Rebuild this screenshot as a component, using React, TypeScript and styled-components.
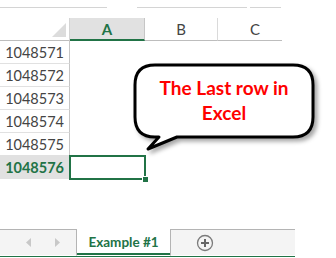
import React from 'react';
import styled, { createGlobalStyle } from 'styled-components';

const GlobalStyle = createGlobalStyle`
  html, body {
    margin: 0;
    padding: 0;
    background: #fff;
  }
  body {
    font-family: Lato, "Liberation Sans", sans-serif;
  }
`;

const Page = styled.div`
  position: relative;
  width: 336px;
  height: 258px;
  overflow: hidden;
  display: flex;
  flex-direction: column;
`;

/* bits of the name box / formula bar cut off at the top */
const TopStrip = styled.div`
  height: 18px;
  display: flex;
  align-items: flex-start;
`;

const BarEdge = styled.div<{ $gap: number; $width: number }>`
  margin-left: ${p => p.$gap}px;
  width: ${p => p.$width}px;
  height: 7px;
  border-bottom: 1px solid #d4d4d4;
`;

const Sheet = styled.div`
  display: grid;
  grid-template-columns: 70px 75px 73px 64px;
  grid-auto-rows: 23px;
  width: 282px;
`;

const Corner = styled.div`
  position: relative;
  border-right: 1px solid #d4d4d4;
  border-bottom: 1px solid #bdbdbd;
  &::after {
    content: '';
    position: absolute;
    right: 3px;
    bottom: 3px;
    border-style: solid;
    border-width: 0 0 14px 14px;
    border-color: transparent transparent #dcdcdc transparent;
  }
`;

const ColHead = styled.div<{ $active?: boolean; $pad?: number }>`
  display: flex;
  align-items: center;
  justify-content: ${p => (p.$pad ? 'flex-start' : 'center')};
  padding-left: ${p => p.$pad || 0}px;
  font-size: 15px;
  font-weight: ${p => (p.$active ? 700 : 400)};
  color: ${p => (p.$active ? '#217346' : '#444')};
  background: ${p => (p.$active ? '#e1e1e1' : '#fff')};
  border-right: 1px solid ${p => (p.$active ? '#c6c6c6' : '#dadada')};
  border-bottom: ${p => (p.$active ? '2px solid #217346' : '1px solid #bdbdbd')};
  padding-top: ${p => (p.$active ? 1 : 0)}px;
`;

const LastHead = styled(ColHead)`
  border-right: none;
`;

const RowHead = styled.div<{ $active?: boolean }>`
  display: flex;
  align-items: center;
  justify-content: flex-end;
  padding-right: 5px;
  font-size: 14.5px;
  font-weight: ${p => (p.$active ? 700 : 400)};
  color: ${p => (p.$active ? '#217346' : '#444')};
  background: ${p => (p.$active ? '#e1e1e1' : '#fff')};
  border-right: 1px solid #c6c6c6;
  border-bottom: 1px solid #e1e1e1;
`;

const Cell = styled.div`
  position: relative;
`;

const Selection = styled.div`
  position: absolute;
  left: -1px;
  top: -1px;
  right: -1px;
  bottom: -1px;
  border: 2px solid #217346;
  &::after {
    content: '';
    position: absolute;
    right: -4px;
    bottom: -4px;
    width: 5px;
    height: 5px;
    background: #217346;
    border: 1px solid #fff;
    border-right: none;
    border-bottom: none;
  }
`;

const Spacer = styled.div`
  flex: 1;
`;

const TabBar = styled.div`
  display: flex;
  width: 295px;
  height: 27px;
  border-bottom: 1px solid #217346;
  margin-bottom: 1px;
`;

const Nav = styled.div`
  width: 77px;
  display: flex;
  align-items: center;
  gap: 24px;
  padding-left: 26px;
  box-sizing: border-box;
  background: #f4f4f4;
  border-top: 1px solid #b4b4b4;
  border-right: 1px solid #b4b4b4;
  border-bottom: 1px solid #fff;
`;

const Tab = styled.div`
  width: 93px;
  display: flex;
  align-items: center;
  justify-content: center;
  box-sizing: border-box;
  padding-top: 1px;
  font-size: 13.5px;
  font-weight: 700;
  color: #217346;
  background: #fff;
  border-bottom: 2px solid #217346;
  margin-bottom: 1px;
`;

const AddArea = styled.div`
  flex: 1;
  display: flex;
  align-items: center;
  padding-left: 25px;
  background: #f4f4f4;
  border-top: 1px solid #b4b4b4;
  border-left: 1px solid #b4b4b4;
  border-bottom: 1px solid #fff;
`;

const Callout = styled.div`
  position: absolute;
  left: 128px;
  top: 58px;
  width: 195px;
  height: 100px;
`;

const BubbleShape = styled.svg`
  position: absolute;
  inset: 0;
  filter: drop-shadow(3px 3px 2px rgba(0, 0, 0, 0.35));
`;

const BubbleText = styled.div`
  position: absolute;
  left: 7px;
  top: 17px;
  width: 178px;
  text-align: center;
  font-size: 19px;
  line-height: 25px;
  font-weight: 700;
  color: #ff0000;
`;

const Arrow = ({ dir }: { dir: 'left' | 'right' }) => (
  <svg width="5" height="9" viewBox="0 0 5 9">
    <path d={dir === 'left' ? 'M5 0 L0 4.5 L5 9 Z' : 'M0 0 L5 4.5 L0 9 Z'} fill="#c8c8c8" />
  </svg>
);

const PlusCircle = () => (
  <svg width="18" height="18" viewBox="0 0 18 18">
    <circle cx="9" cy="9" r="7.5" fill="none" stroke="#7b7b7b" strokeWidth="1.3" />
    <path d="M9 5 V13 M5 9 H13" stroke="#666" strokeWidth="2" />
  </svg>
);

const rows = [1048571, 1048572, 1048573, 1048574, 1048575, 1048576];

const App: React.FC = () => {
  return (
    <Page>
      <GlobalStyle />
      <TopStrip>
        <BarEdge $gap={0} $width={107} />
        <BarEdge $gap={30} $width={110} />
        <BarEdge $gap={3} $width={31} />
      </TopStrip>
      <Sheet>
        <Corner />
        <ColHead $active>A</ColHead>
        <ColHead>B</ColHead>
        <LastHead $pad={32}>C</LastHead>
        {rows.map((n, i) => {
          const last = i === rows.length - 1;
          return (
            <React.Fragment key={n}>
              <RowHead $active={last}>{n}</RowHead>
              <Cell>{last && <Selection />}</Cell>
              <Cell />
              <Cell />
            </React.Fragment>
          );
        })}
      </Sheet>
      <Spacer />
      <TabBar>
        <Nav>
          <Arrow dir="left" />
          <Arrow dir="right" />
        </Nav>
        <Tab>Example #1</Tab>
        <AddArea>
          <PlusCircle />
        </AddArea>
      </TabBar>
      <Callout>
        <BubbleShape width="195" height="100" viewBox="0 0 195 100">
          <path
            d="M27 7 H165 Q185 7 185 27 V59 Q185 79 165 79 H49 L20 91 L31 79 H27 Q7 79 7 59 V27 Q7 7 27 7 Z"
            fill="#fff"
            stroke="#000"
            strokeWidth="3"
            strokeLinejoin="round"
          />
        </BubbleShape>
        <BubbleText>
          The Last row in
          <br />
          Excel
        </BubbleText>
      </Callout>
    </Page>
  );
};

export default App;
